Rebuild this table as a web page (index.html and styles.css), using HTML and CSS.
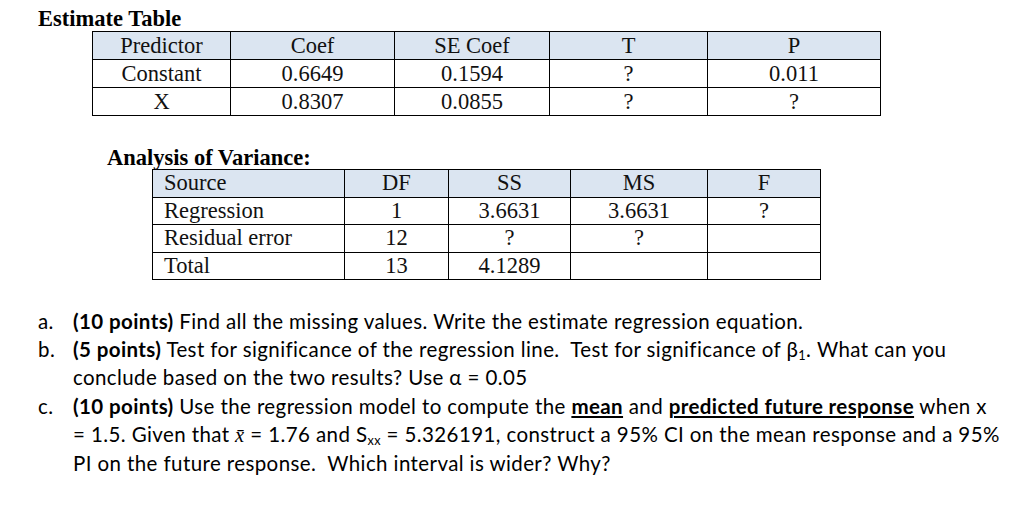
FILE: index.html
```html
<!DOCTYPE html>
<html lang="en">
<head>
<meta charset="utf-8">
<title>Regression Problem</title>
<link rel="stylesheet" href="styles.css">
</head>
<body>
<main class="page">
  <h2 class="title">Estimate Table</h2>
  <table class="grid est">
    <colgroup><col style="width:138px"><col style="width:164px"><col style="width:155px"><col style="width:158px"><col style="width:173px"></colgroup>
    <tr class="head"><td>Predictor</td><td>Coef</td><td>SE Coef</td><td>T</td><td>P</td></tr>
    <tr><td>Constant</td><td>0.6649</td><td>0.1594</td><td>?</td><td>0.011</td></tr>
    <tr><td>X</td><td>0.8307</td><td>0.0855</td><td>?</td><td>?</td></tr>
  </table>

  <h2 class="title title-anova">Analysis of Variance:</h2>
  <table class="grid anova">
    <colgroup><col style="width:192px"><col style="width:104px"><col style="width:122px"><col style="width:137px"><col style="width:113px"></colgroup>
    <tr class="head"><td class="left">Source</td><td>DF</td><td>SS</td><td>MS</td><td>F</td></tr>
    <tr><td class="left">Regression</td><td>1</td><td>3.6631</td><td>3.6631</td><td>?</td></tr>
    <tr><td class="left">Residual error</td><td>12</td><td>?</td><td>?</td><td></td></tr>
    <tr><td class="left">Total</td><td>13</td><td>4.1289</td><td></td><td></td></tr>
  </table>

  <ol class="questions">
    <li class="q"><span class="q-mark">a.</span><span class="q-text"><b>(10 points)</b> Find all the missing values. Write the estimate regression equation.</span></li>
    <li class="q"><span class="q-mark">b.</span><span class="q-text"><b>(5 points)</b> Test for significance of the regression line.&nbsp; Test for significance of β<sub class="sub">1</sub>. What can you<br>conclude based on the two results? Use α = 0.05</span></li>
    <li class="q"><span class="q-mark">c.</span><span class="q-text"><b>(10 points)</b> Use the regression model to compute the <b class="u">mean</b> and <b class="u">predicted future response</b> when x<br>= 1.5. Given that <span class="xbar">x&#772;</span> = 1.76 and S<sub class="sub">xx</sub> = 5.326191, construct a 95% CI on the mean response and a 95%<br>PI on the future response.&nbsp; Which interval is wider? Why?</span></li>
  </ol>
</main>
</body>
</html>
```

FILE: styles.css
```css
html, body {
  margin: 0;
  padding: 0;
  background: #ffffff;
}

.page {
  padding: 8px 0 0 38px;
  font-family: "Liberation Serif", "Times New Roman", serif;
  color: #000;
}

.title {
  margin: 0;
  font-size: 22.5px;
  line-height: 22px;
  font-weight: bold;
}

.grid {
  border-collapse: collapse;
  table-layout: fixed;
  font-size: 22.5px;
  color: #111;
}

.grid td {
  border: 1px solid #000;
  padding: 0;
  text-align: center;
  white-space: nowrap;
  overflow: hidden;
}

.grid tr.head td {
  background: #dbe5f1;
}

.grid td:last-child {
  box-shadow: 1px 0 0 #8a8a8a;
}

.est {
  margin: 1px 0 0 54px;
  width: 788px;
}

.est td {
  height: 27px;
  line-height: 27px;
}

.title-anova {
  margin: 31px 0 0 69px;
}

.anova {
  margin: 0 0 0 114px;
  width: 668px;
}

.anova td {
  height: 26.5px;
  line-height: 26.5px;
}

.anova td.left {
  text-align: left;
  padding-left: 11px;
}

.questions {
  list-style: none;
  margin: 27px 0 0 0;
  padding: 0;
  font-family: Lato, "Liberation Sans", sans-serif;
  font-size: 20.5px;
  letter-spacing: 0.4px;
  line-height: 28.2px;
  color: #000;
}

.q {
  display: flex;
}

.q-mark {
  flex: 0 0 35px;
}

.q-text {
  white-space: nowrap;
}

.q-text b {
  font-weight: bold;
}

.u {
  text-decoration: underline;
  text-decoration-thickness: 1.5px;
  text-underline-offset: 2px;
}

.sub {
  font-size: 0.62em;
  line-height: 0;
  vertical-align: -0.22em;
}

.xbar {
  font-family: "Liberation Serif", serif;
  font-style: italic;
}
```
